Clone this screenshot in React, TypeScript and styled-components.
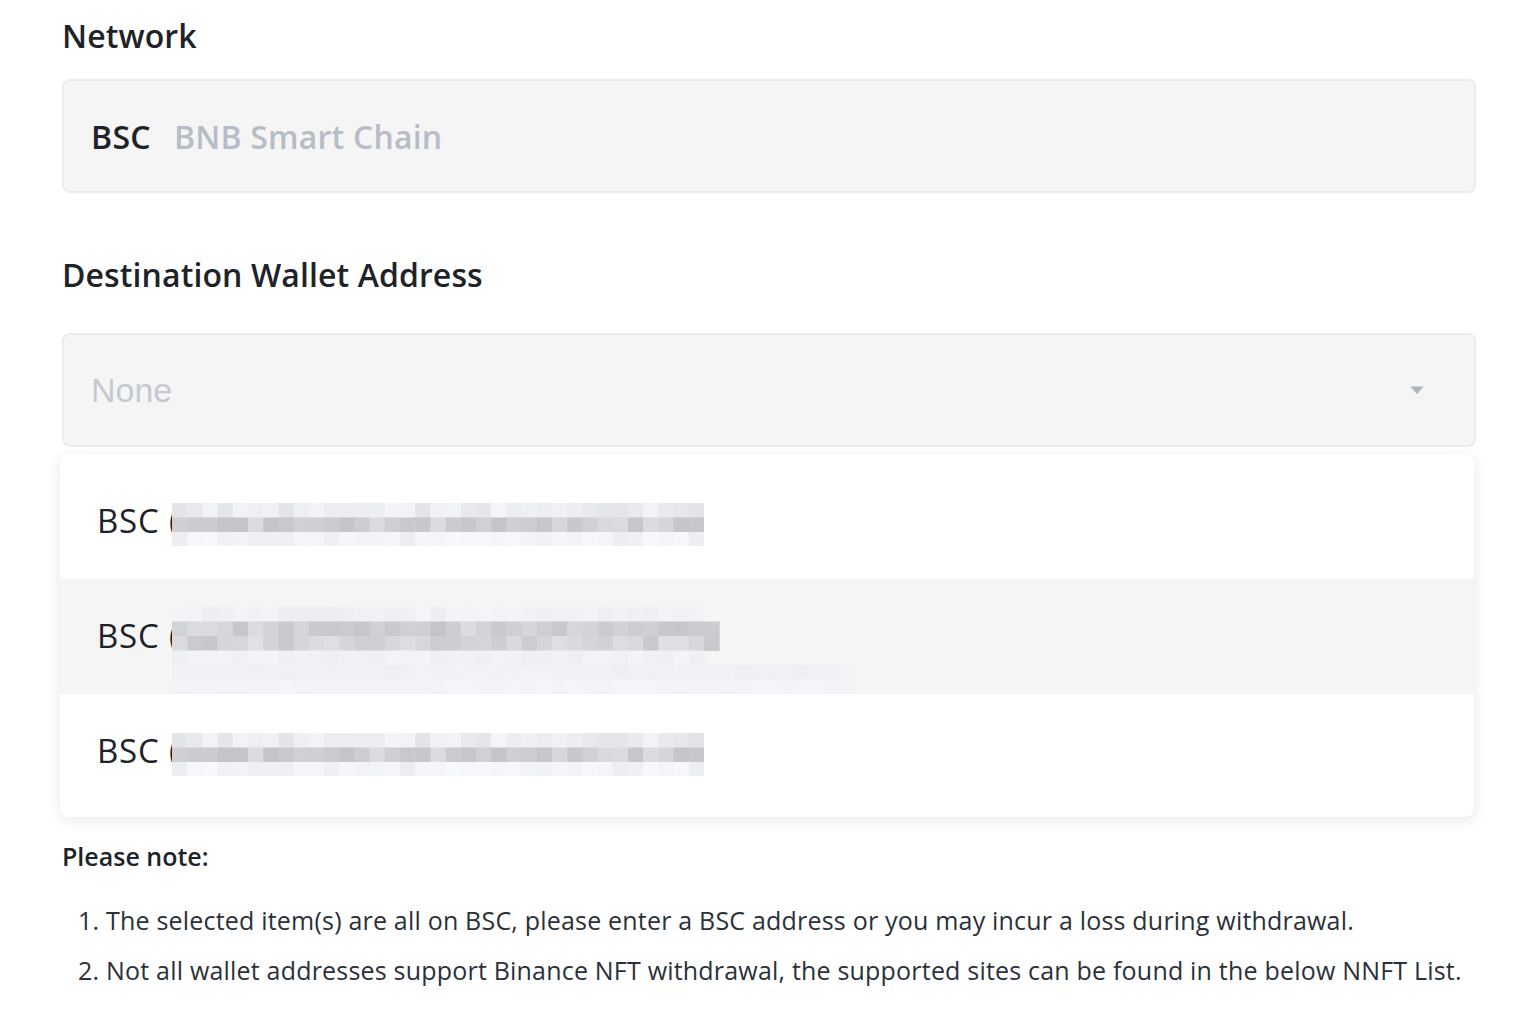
import React from "react";
import styled, { createGlobalStyle } from "styled-components";

const GlobalStyle = createGlobalStyle`
  html, body {
    margin: 0;
    padding: 0;
    background: #ffffff;
  }
  body {
    font-family: "Open Sans", "Noto Sans", "Liberation Sans", sans-serif;
    color: #1e2329;
  }
`;

const Page = styled.div`
  width: 1414px;
  padding: 16px 0 40px 62px;
  display: flex;
  flex-direction: column;
`;

const SectionTitle = styled.h2<{ $gap: number }>`
  margin: 0 0 ${(p) => p.$gap}px;
  font-size: 32px;
  line-height: 40px;
  font-weight: 600;
  color: #1e2329;
  letter-spacing: 0.1px;
`;

const InputBox = styled.div`
  box-sizing: border-box;
  height: 114px;
  border: 2px solid #eaecef;
  border-radius: 8px;
  background: #f5f5f5;
  padding: 0 50px 0 27px;
  display: flex;
  align-items: center;
  gap: 23px;
`;

const Spacer = styled.div<{ $h: number }>`
  height: ${(p) => p.$h}px;
  flex: none;
`;

const Symbol = styled.span`
  font-size: 32px;
  font-weight: 600;
  color: #1e2329;
  letter-spacing: 0.3px;
`;

const ChainName = styled.span`
  font-size: 32px;
  font-weight: 600;
  color: #b7bdc6;
  letter-spacing: 0.2px;
`;

const Placeholder = styled.span`
  flex: 1;
  font-family: "Liberation Sans", Arial, sans-serif;
  font-size: 34px;
  color: #c5cad1;
`;

const Caret = styled.svg`
  width: 14px;
  height: 10px;
  flex: none;
`;

const Menu = styled.div`
  margin: 7px 0 0 -2px;
  width: 1414px;
  box-sizing: border-box;
  padding: 10px 0 8px;
  background: #ffffff;
  border-radius: 8px;
  box-shadow: 0 3px 14px rgba(24, 26, 32, 0.1), 0 0 1px rgba(24, 26, 32, 0.06);
`;

const Option = styled.div<{ $active?: boolean }>`
  height: 115px;
  padding-left: 37px;
  display: flex;
  align-items: center;
  background: ${(p) => (p.$active ? "#f5f5f5" : "transparent")};
  font-size: 33px;
  line-height: 40px;
  font-weight: 400;
  letter-spacing: 0.8px;
  color: #1e2329;
  white-space: nowrap;
`;

const Prefix = styled.span`
  flex: none;
  margin-top: -2px;
`;

const Masked = styled.svg<{ $shift: number }>`
  flex: none;
  margin-left: -8px;
  margin-top: ${(p) => p.$shift}px;
  display: block;
`;

const NoteTitle = styled.div`
  margin-top: 23px;
  font-size: 25px;
  line-height: 32px;
  font-weight: 600;
  color: #1e2329;
`;

const NoteList = styled.ol`
  margin: 23px 0 0;
  padding-left: 44px;
  font-size: 25px;
  line-height: 50px;
  letter-spacing: 0.2px;
  color: #2b3139;
`;

const NoteItem = styled.li`
  padding-left: 0;
`;

// Pixelated address mask: rows of grey cells with pseudo-random tones.
type MaskRow = { lo: number; hi: number; cols: number };

const CELL_W = 15.2;
const CELL_H = 14.5;

function tone(seed: number, lo: number, hi: number) {
  const x = Math.sin(seed * 12.9898 + 78.233) * 43758.5453;
  const f = x - Math.floor(x);
  const v = Math.round(lo + (hi - lo) * f);
  return `rgb(${v - 3},${v - 1},${v + 3})`;
}

function AddressMask({ rows, seed, shift }: { rows: MaskRow[]; seed: number; shift: number }) {
  const width = Math.max(...rows.map((r) => r.cols)) * CELL_W;
  const height = rows.length * CELL_H;
  return (
    <Masked $shift={shift} width={width} height={height} viewBox={`0 0 ${width} ${height}`}>
      {rows.map((r, ri) =>
        Array.from({ length: r.cols }).map((_, ci) => (
          <rect
            key={`${ri}-${ci}`}
            x={ci * CELL_W}
            y={ri * CELL_H}
            width={CELL_W + 0.5}
            height={CELL_H + 0.5}
            fill={tone(seed * 101 + ri * 37 + ci, r.lo, r.hi)}
          />
        ))
      )}
    </Masked>
  );
}

const plainRows: MaskRow[] = [
  { lo: 228, hi: 246, cols: 35 },
  { lo: 196, hi: 222, cols: 35 },
  { lo: 238, hi: 250, cols: 35 },
];

const activeRows: MaskRow[] = [
  { lo: 238, hi: 246, cols: 35 },
  { lo: 198, hi: 222, cols: 36 },
  { lo: 200, hi: 226, cols: 36 },
  { lo: 240, hi: 245, cols: 35 },
  { lo: 241, hi: 244, cols: 45 },
  { lo: 244, hi: 246, cols: 45 },
];

export default function App() {
  return (
    <>
      <GlobalStyle />
      <Page>
        <SectionTitle $gap={23}>Network</SectionTitle>
        <InputBox>
          <Symbol>BSC</Symbol>
          <ChainName>BNB Smart Chain</ChainName>
        </InputBox>
        <Spacer $h={62} />
        <SectionTitle $gap={38}>Destination Wallet Address</SectionTitle>
        <InputBox>
          <Placeholder>None</Placeholder>
          <Caret viewBox="0 0 14 10">
            <path d="M0.5 1.5 H13.5 L7.6 8.6 Q7 9.3 6.4 8.6 Z" fill="#aeb4bc" />
          </Caret>
        </InputBox>
        <Menu>
          <Option>
            <Prefix>BSC (</Prefix>
            <AddressMask rows={plainRows} seed={1} shift={6} />
          </Option>
          <Option $active>
            <Prefix>BSC (</Prefix>
            <AddressMask rows={activeRows} seed={2} shift={28} />
          </Option>
          <Option>
            <Prefix>BSC (</Prefix>
            <AddressMask rows={plainRows} seed={1} shift={6} />
          </Option>
        </Menu>
        <NoteTitle>Please note:</NoteTitle>
        <NoteList>
          <NoteItem>
            The selected item(s) are all on BSC, please enter a BSC address or you may incur a loss during withdrawal.
          </NoteItem>
          <NoteItem>
            Not all wallet addresses support Binance NFT withdrawal, the supported sites can be found in the below NNFT List.
          </NoteItem>
        </NoteList>
      </Page>
    </>
  );
}
